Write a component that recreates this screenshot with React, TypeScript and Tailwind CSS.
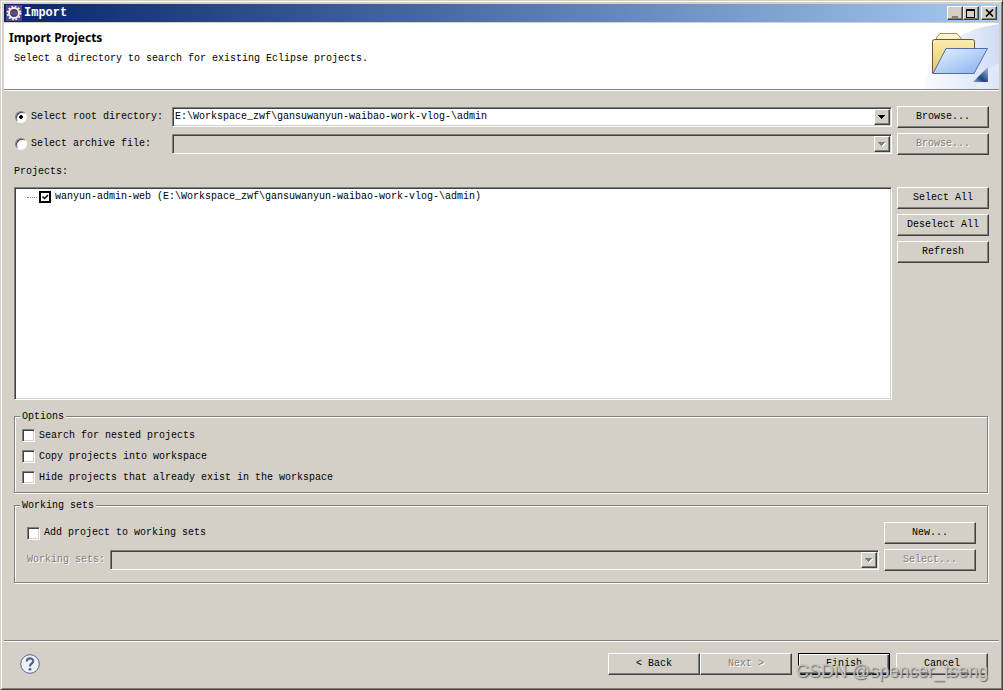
import type { ComponentProps, ReactNode } from "react";
import { useState } from "react";

const RAISED =
	"border border-t-white border-l-white border-r-[#404040] border-b-[#404040] shadow-[inset_-1px_-1px_0_#808080]";
const SUNKEN =
	"border border-t-[#808080] border-l-[#808080] border-r-white border-b-white shadow-[inset_1px_1px_0_#404040,inset_-1px_-1px_0_#d4d0c8]";
const DISABLED_TEXT = "text-[#808080] [text-shadow:1px_1px_0_#fff]";

function Button({
	children,
	isDefault,
	...props
}: ComponentProps<"button"> & { isDefault?: boolean }) {
	return (
		<button
			type="button"
			className={`h-[22px] w-[92px] shrink-0 bg-[#d4d0c8] whitespace-pre ${
				isDefault
					? "border border-black shadow-[inset_1px_1px_0_#fff,inset_-1px_-1px_0_#404040,inset_-2px_-2px_0_#808080]"
					: RAISED
			} ${props.disabled ? DISABLED_TEXT : ""}`}
			{...props}
		>
			{children}
		</button>
	);
}

function Combo({
	id,
	label,
	disabled,
	options = [],
}: {
	id: string;
	label: string;
	disabled?: boolean;
	options?: string[];
}) {
	return (
		<div className="relative h-5 min-w-0 flex-1">
			<select
				id={id}
				aria-label={label}
				disabled={disabled}
				className={`block h-full w-full appearance-none rounded-none pr-5 pl-0.5 opacity-100 outline-none ${SUNKEN} ${
					disabled ? "bg-[#d4d0c8]" : "bg-white"
				}`}
			>
				{options.map((option) => (
					<option key={option}>{option}</option>
				))}
			</select>
			<span
				className={`pointer-events-none absolute top-0.5 right-0.5 flex size-4 items-center justify-center bg-[#d4d0c8] ${RAISED}`}
			>
				<svg
					width="8"
					height="5"
					viewBox="0 0 8 5"
					shapeRendering="crispEdges"
					aria-hidden="true"
				>
					{disabled ? (
						<path d="M1 1h7v1H7v1H6v1H5v1H4V4H3V3H2V2H1z" fill="#fff" />
					) : null}
					<path
						d="M0 0h7v1H6v1H5v1H4v1H3V3H2V2H1V1H0z"
						fill={disabled ? "#808080" : "#000"}
					/>
				</svg>
			</span>
		</div>
	);
}

function Radio({ label, ...props }: { label: string } & ComponentProps<"input">) {
	return (
		<label className="flex w-[152px] shrink-0 items-center gap-1">
			<input
				type="radio"
				name="source"
				className="size-3 appearance-none rounded-full border border-t-[#808080] border-r-white border-b-white border-l-[#808080] bg-white shadow-[inset_1px_1px_0_#404040] checked:bg-[radial-gradient(circle,#000_2px,#fff_2px)]"
				{...props}
			/>
			{label}
		</label>
	);
}

function Checkbox({ label }: { label: string }) {
	return (
		<label className="flex items-center gap-1">
			<input
				type="checkbox"
				className={`size-[13px] appearance-none bg-white checked:bg-[#404040] ${SUNKEN}`}
			/>
			{label}
		</label>
	);
}

function Group({ title, children }: { title: string; children: ReactNode }) {
	return (
		<fieldset className="min-w-0 border border-[#808080] shadow-[1px_1px_0_#fff,inset_1px_1px_0_#fff]">
			<legend className="ml-[5px] bg-[#d4d0c8] px-0.5 pt-px leading-3">
				{title}
			</legend>
			{children}
		</fieldset>
	);
}

function GearIcon() {
	return (
		<svg width="16" height="16" viewBox="0 0 16 16" aria-hidden="true">
			<rect width="16" height="16" fill="#5a4588" />
			<circle
				cx="8"
				cy="8"
				r="6.500"
				fill="none"
				stroke="#f4f0e8"
				strokeWidth="1.800"
				strokeDasharray="1.700 1.703"
			/>
			<circle cx="8" cy="8" r="5" fill="#463c66" stroke="#f4f0e8" strokeWidth="2" />
			<path d="M4.500 7h7M4.500 9h7" stroke="#76709c" strokeWidth="0.800" />
		</svg>
	);
}

function FolderBanner() {
	return (
		<svg width="75" height="66" viewBox="0 0 75 66" aria-hidden="true">
			<defs>
				<linearGradient id="sky" x1="0" y1="0" x2="1" y2="0">
					<stop offset="0" stopColor="#f8fafe" />
					<stop offset="0.5" stopColor="#e9effa" />
					<stop offset="1" stopColor="#d0dbf4" />
				</linearGradient>
				<linearGradient id="back" x1="0" y1="0" x2="0" y2="1">
					<stop offset="0" stopColor="#fbeeb0" />
					<stop offset="1" stopColor="#e6c661" />
				</linearGradient>
				<linearGradient id="front" x1="0" y1="0" x2="1" y2="1">
					<stop offset="0" stopColor="#e6f4ff" />
					<stop offset="1" stopColor="#86aeee" />
				</linearGradient>
				<linearGradient id="corner" x1="0" y1="1" x2="1" y2="0">
					<stop offset="0" stopColor="#8fabd2" />
					<stop offset="0.4" stopColor="#1d4583" />
					<stop offset="1" stopColor="#a9c0df" />
				</linearGradient>
			</defs>
			<path d="M75 1C35 6 3 28 0 66h75z" fill="url(#sky)" />
			<path d="M75 40C62 44 54 54 51 66h24z" fill="#fff" fillOpacity="0.3" />
			<path d="M12 17l1-3 3-3.500h17l3 3.500 2 3" fill="#fdf6cc" stroke="#a88d58" />
			<path
				d="M8.500 50V18.500q0-2 2-2h38q2 0 2 2V50z"
				fill="url(#back)"
				stroke="#6f5039"
			/>
			<path
				d="M22 25.500h41.500L50 50.500H9z"
				fill="url(#front)"
				stroke="#5468b4"
				strokeLinejoin="round"
			/>
			<path d="M64 44v15H49z" fill="url(#corner)" />
		</svg>
	);
}

function TitleBar() {
	const button = `flex h-3.5 w-4 items-center justify-center bg-[#d4d0c8] ${RAISED}`;

	return (
		<header className="flex h-[18px] items-center bg-linear-to-r from-[#0a246a] to-[#a6caf0] px-0.5">
			<GearIcon />
			<h1 className="ml-0.5 flex-1 text-[12px] font-bold text-white">Import</h1>
			<button type="button" aria-label="Minimize" className={button}>
				<svg width="10" height="9" shapeRendering="crispEdges" aria-hidden="true">
					<path d="M2 7h6v2H2z" fill="#808080" />
				</svg>
			</button>
			<button type="button" aria-label="Maximize" className={button}>
				<svg width="10" height="9" shapeRendering="crispEdges" aria-hidden="true">
					<path d="M0 0h9v9H0zM1 2v6h7V2z" fillRule="evenodd" />
				</svg>
			</button>
			<button type="button" aria-label="Close" className={`ml-0.5 ${button}`}>
				<svg width="9" height="8" viewBox="0 0 9 8" aria-hidden="true">
					<path d="M1 .5l7 7M8 .5l-7 7" stroke="#000" strokeWidth="1.600" />
				</svg>
			</button>
		</header>
	);
}

export default function App() {
	const [source, setSource] = useState("directory");
	const [selected, setSelected] = useState(true);

	return (
		<div className="relative flex min-h-screen flex-col border border-t-[#d4d0c8] border-r-[#404040] border-b-[#404040] border-l-[#d4d0c8] bg-[#d4d0c8] p-[3px] font-['Liberation_Mono',monospace] text-[10px] leading-3 text-black shadow-[inset_1px_1px_0_#fff,inset_-1px_-1px_0_#808080]">
			<TitleBar />

			<section className="mt-px flex justify-between border-b border-[#808080] bg-white shadow-[0_1px_0_#fff]">
				<div className="pt-1.5 pl-[5px]">
					<h2 className="font-['Noto_Sans',sans-serif] text-[12px] leading-[18px] font-bold">
						Import Projects
					</h2>
					<p className="mt-1.5 pl-[5px]">
						Select a directory to search for existing Eclipse projects.
					</p>
				</div>
				<FolderBanner />
			</section>

			<main className="flex flex-col px-2.5 pt-4">
				<div className="flex items-center gap-[5px]">
					<div className="flex flex-1 items-center gap-[5px] pl-px">
						<Radio
							label="Select root directory:"
							checked={source === "directory"}
							onChange={() => setSource("directory")}
						/>
						<Combo
							id="root-directory"
							label="Root directory"
							options={["E:\\Workspace_zwf\\gansuwanyun-waibao-work-vlog-\\admin"]}
							disabled={source !== "directory"}
						/>
					</div>
					<Button disabled={source !== "directory"}>Browse...</Button>
				</div>
				<div className="mt-[5px] flex items-center gap-[5px]">
					<div className="flex flex-1 items-center gap-[5px] pl-px">
						<Radio
							label="Select archive file:"
							checked={source === "archive"}
							onChange={() => setSource("archive")}
						/>
						<Combo
							id="archive-file"
							label="Archive file"
							disabled={source !== "archive"}
						/>
					</div>
					<Button disabled={source !== "archive"}>Browse...</Button>
				</div>

				<h3 className="mt-[11px]">Projects:</h3>
				<div className="mt-[9px] flex gap-[5px]">
					<div className={`h-[213px] min-w-0 flex-1 bg-white pt-[3px] pl-3 ${SUNKEN}`}>
						<label className="flex items-center">
							<span className="mr-0.5 w-2.5 border-t border-dotted border-[#808080]" />
							<span className="relative flex size-3">
								<input
									type="checkbox"
									checked={selected}
									onChange={(e) => setSelected(e.target.checked)}
									className="size-3 appearance-none border-2 border-black bg-white"
								/>
								{selected ? (
									<svg
										className="pointer-events-none absolute inset-0"
										width="12"
										height="12"
										aria-hidden="true"
									>
										<path
											d="M3.500 5.500l2 2 3.500-3.500"
											fill="none"
											stroke="#000"
											strokeWidth="1.500"
										/>
									</svg>
								) : null}
							</span>
							<span className="pl-1">
								wanyun-admin-web (E:\Workspace_zwf\gansuwanyun-waibao-work-vlog-\admin)
							</span>
						</label>
					</div>
					<div className="flex flex-col gap-[5px]">
						<Button onClick={() => setSelected(true)}>Select All</Button>
						<Button onClick={() => setSelected(false)}>Deselect All</Button>
						<Button>Refresh</Button>
					</div>
				</div>

				<div className="mt-2.5 mr-px flex flex-col gap-1.5">
					<Group title="Options">
						<div className="flex flex-col gap-2 px-[7px] pt-1.5 pb-2">
							<Checkbox label="Search for nested projects" />
							<Checkbox label="Copy projects into workspace" />
							<Checkbox label="Hide projects that already exist in the workspace" />
						</div>
					</Group>
					<Group title="Working sets">
						<div className="flex flex-col gap-[5px] pt-2.5 pr-[11px] pb-[11px] pl-3">
							<div className="flex items-center justify-between">
								<Checkbox label="Add project to working sets" />
								<Button>New...</Button>
							</div>
							<div className="flex items-center gap-[5px]">
								<label htmlFor="working-sets" className={DISABLED_TEXT}>
									Working sets:
								</label>
								<Combo id="working-sets" label="Working sets" disabled />
								<Button disabled>Select...</Button>
							</div>
						</div>
					</Group>
				</div>
			</main>

			<footer className="mt-auto flex items-center border-t border-[#808080] pt-3 pr-[11px] pb-[11px] pl-4 shadow-[inset_0_1px_0_#fff]">
				<button type="button" aria-label="Help">
					<svg width="20" height="20" viewBox="0 0 20 20" aria-hidden="true">
						<circle cx="10" cy="10" r="9.300" fill="#eef2f8" stroke="#51658c" />
						<path
							d="M6.800 7.500c0-4 6.400-4 6.400-.4 0 2.400-3.200 2.400-3.200 5.400"
							fill="none"
							stroke="#51658c"
							strokeWidth="2.200"
						/>
						<circle cx="10" cy="15.300" r="1.400" fill="#51658c" />
					</svg>
				</button>
				<div className="ml-auto flex gap-1.5">
					<div className="flex">
						<Button>{"< Back"}</Button>
						<Button disabled>{"Next >"}</Button>
					</div>
					<Button isDefault>Finish</Button>
					<Button>Cancel</Button>
				</div>
			</footer>

			<p className="pointer-events-none absolute right-3.5 bottom-2 font-['Liberation_Sans',sans-serif] text-[18px] leading-5 text-[#c4c4c4] [text-shadow:1px_1px_1px_#666]">
				CSDN @spencer_tseng
			</p>
		</div>
	);
}
